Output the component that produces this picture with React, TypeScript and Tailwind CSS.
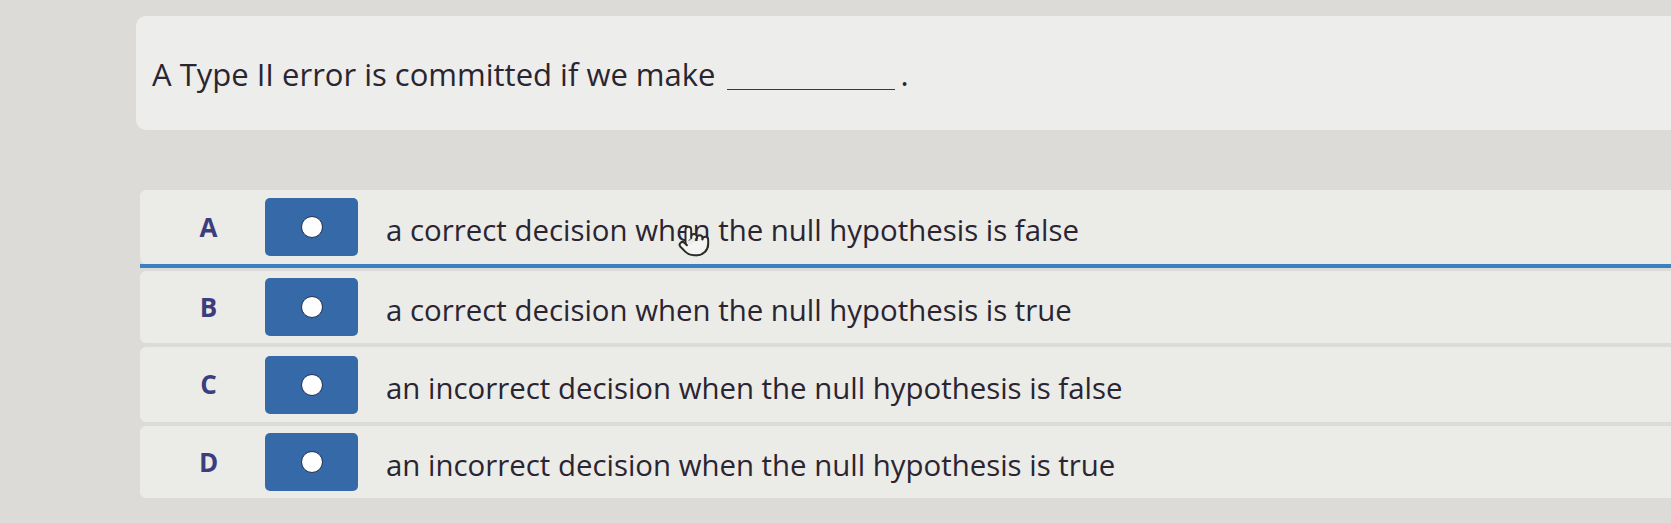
import React from 'react';
import { Pointer } from 'lucide-react';

const options = [
  { letter: 'A', text: 'a correct decision when the null hypothesis is false', h: 'h-[74px]' },
  { letter: 'B', text: 'a correct decision when the null hypothesis is true', h: 'h-[72px]' },
  { letter: 'C', text: 'an incorrect decision when the null hypothesis is false', h: 'h-[75px]' },
  { letter: 'D', text: 'an incorrect decision when the null hypothesis is true', h: 'h-[72px]' },
];

const RadioButton: React.FC = () => (
  <div className="w-[93px] h-[58px] shrink-0 rounded-[5px] bg-[#3569a8] flex items-center justify-center">
    <div className="w-[22px] h-[22px] rounded-full bg-white border-[1.5px] border-[#1d2f4f]" />
  </div>
);

const App: React.FC = () => {
  return (
    <div className="w-[1671px] h-[523px] overflow-hidden bg-[#dcdbd7] pl-[136px] pt-[16px] font-['Open_Sans',sans-serif] text-[#2a2530]">
      <div className="h-[114px] rounded-l-[10px] bg-[#ededeb] flex items-center pl-[16px] pt-[2px]">
        <p className="text-[31px] leading-none flex items-end">
          A Type II error is committed if we make
          <span className="inline-block w-[168px] ml-[12px] mb-[0px] border-b-[1.5px] border-[#3a3a3a]" />
          <span className="ml-[5px]">.</span>
        </p>
      </div>

      <div className="mt-[60px] ml-[4px] flex flex-col">
        {options.map((o, i) => (
          <React.Fragment key={o.letter}>
            <div
              className={`relative ${o.h} ${i === 1 ? 'mt-[3px]' : i > 1 ? 'mt-[4px]' : ''} rounded-l-[6px] bg-[#ebebe8] flex items-center`}
            >
              <div className="w-[125px] pl-[12px] shrink-0 text-center text-[26px] font-bold text-[#3b3d7c]">
                {o.letter}
              </div>
              <RadioButton />
              <div className="ml-[28px] text-[29.4px] leading-none pt-[8px]">{o.text}</div>
              {i === 0 && (
                <Pointer
                  size={34}
                  strokeWidth={1.4}
                  className="absolute left-[537px] top-[34px] text-[#2b2b2b]"
                  fill="#f4f4f2"
                />
              )}
            </div>
            {i === 0 && <div className="h-[4px] bg-[#3d80c0]" />}
          </React.Fragment>
        ))}
      </div>
    </div>
  );
};

export default App;
